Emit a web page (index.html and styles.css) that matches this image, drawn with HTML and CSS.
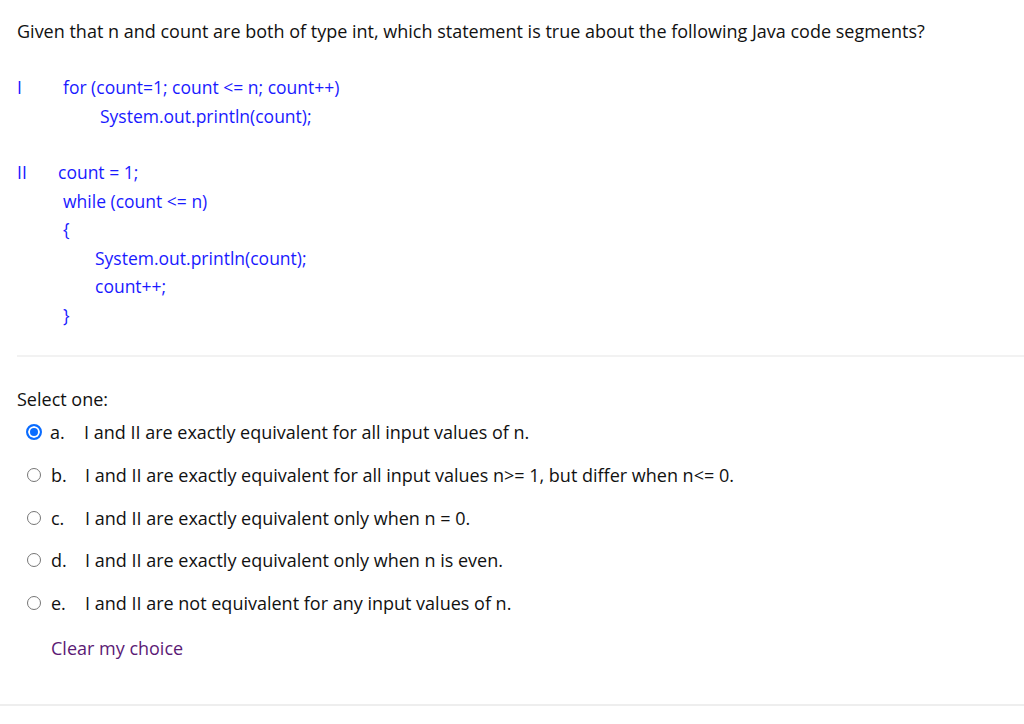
FILE: index.html
```html
<!DOCTYPE html>
<html>
<head>
<meta charset="utf-8">
<link rel="stylesheet" href="styles.css">
</head>
<body>
<div class="question">
  <p class="qtext">Given that n and count are both of type int, which statement is true about the following Java code segments?</p>
  <div class="code">
    <div class="line"><span class="num">I</span><span class="ind-for">for (count=1; count &lt;= n; count++)</span></div>
    <div class="line"><span class="ind-sys1">System.out.println(count);</span></div>
    <div class="line gap"><span class="num">II</span><span class="ind-cnt">count = 1;</span></div>
    <div class="line"><span class="ind-w">while (count &lt;= n)</span></div>
    <div class="line"><span class="ind-w">{</span></div>
    <div class="line"><span class="ind-body">System.out.println(count);</span></div>
    <div class="line"><span class="ind-body">count++;</span></div>
    <div class="line"><span class="ind-w">}</span></div>
  </div>
  <div class="sep"></div>
  <div class="answers">
    <p class="prompt">Select one:</p>
    <div class="opt"><span class="radio checked"></span><span class="letter">a.</span><span class="txt">I and II are exactly equivalent for all input values of n.</span></div>
    <div class="opt"><span class="radio"></span><span class="letter">b.</span><span class="txt">I and II are exactly equivalent for all input values n&gt;= 1, but differ when n&lt;= 0.</span></div>
    <div class="opt"><span class="radio"></span><span class="letter">c.</span><span class="txt">I and II are exactly equivalent only when n = 0.</span></div>
    <div class="opt"><span class="radio"></span><span class="letter">d.</span><span class="txt">I and II are exactly equivalent only when n is even.</span></div>
    <div class="opt"><span class="radio"></span><span class="letter">e.</span><span class="txt">I and II are not equivalent for any input values of n.</span></div>
    <a class="clear" href="#">Clear my choice</a>
  </div>
</div>
<div class="bottom-sep"></div>
</body>
</html>
```
FILE: styles.css
```css
html, body { margin: 0; padding: 0; background: #fff; }
body {
  font-family: "Open Sans", "Noto Sans", sans-serif;
  font-size: 18px;
  color: #1d2125;
}
.question { padding: 0 0 0 17px; }
.qtext { margin: 0; padding-top: 19px; line-height: 24px; color: #111; }
.code { margin-top: 30px; color: #1a1aff; font-size: 17.5px; }
.line { display: flex; height: 28.5px; line-height: 28.5px; white-space: pre; }
.line.gap { margin-top: 28px; }
.num { width: 0; }
.ind-for { margin-left: 46px; }
.ind-sys1 { margin-left: 83px; }
.ind-cnt { margin-left: 41px; }
.ind-w { margin-left: 46px; }
.ind-body { margin-left: 78px; }
.sep { height: 2px; background: #f2f2f2; margin-top: 26px; }
.answers { padding-top: 30px; }
.prompt { margin: 0; line-height: 24px; color: #111; }
.opt { display: flex; align-items: center; height: 42.7px; color: #111; }
.radio {
  width: 14px; height: 14px; border: 1px solid #767676; border-radius: 50%;
  margin-left: 10px; box-sizing: border-box; flex: none; background: #fff;
}
.radio.checked {
  width: 16px; height: 16px; margin-left: 9px;
  background: #0a6cff; border: 2px solid #0a6cff; box-shadow: inset 0 0 0 2px #fff;
}
.letter { margin-left: 10px; width: 34px; }
.radio.checked + .letter { margin-left: 8px; }
.clear { display: inline-block; margin-left: 34px; margin-top: 12px; color: #5b1a75; text-decoration: none; line-height: 24px; }
.bottom-sep { height: 2px; background: #eeeeee; margin-top: 44px; }
```
